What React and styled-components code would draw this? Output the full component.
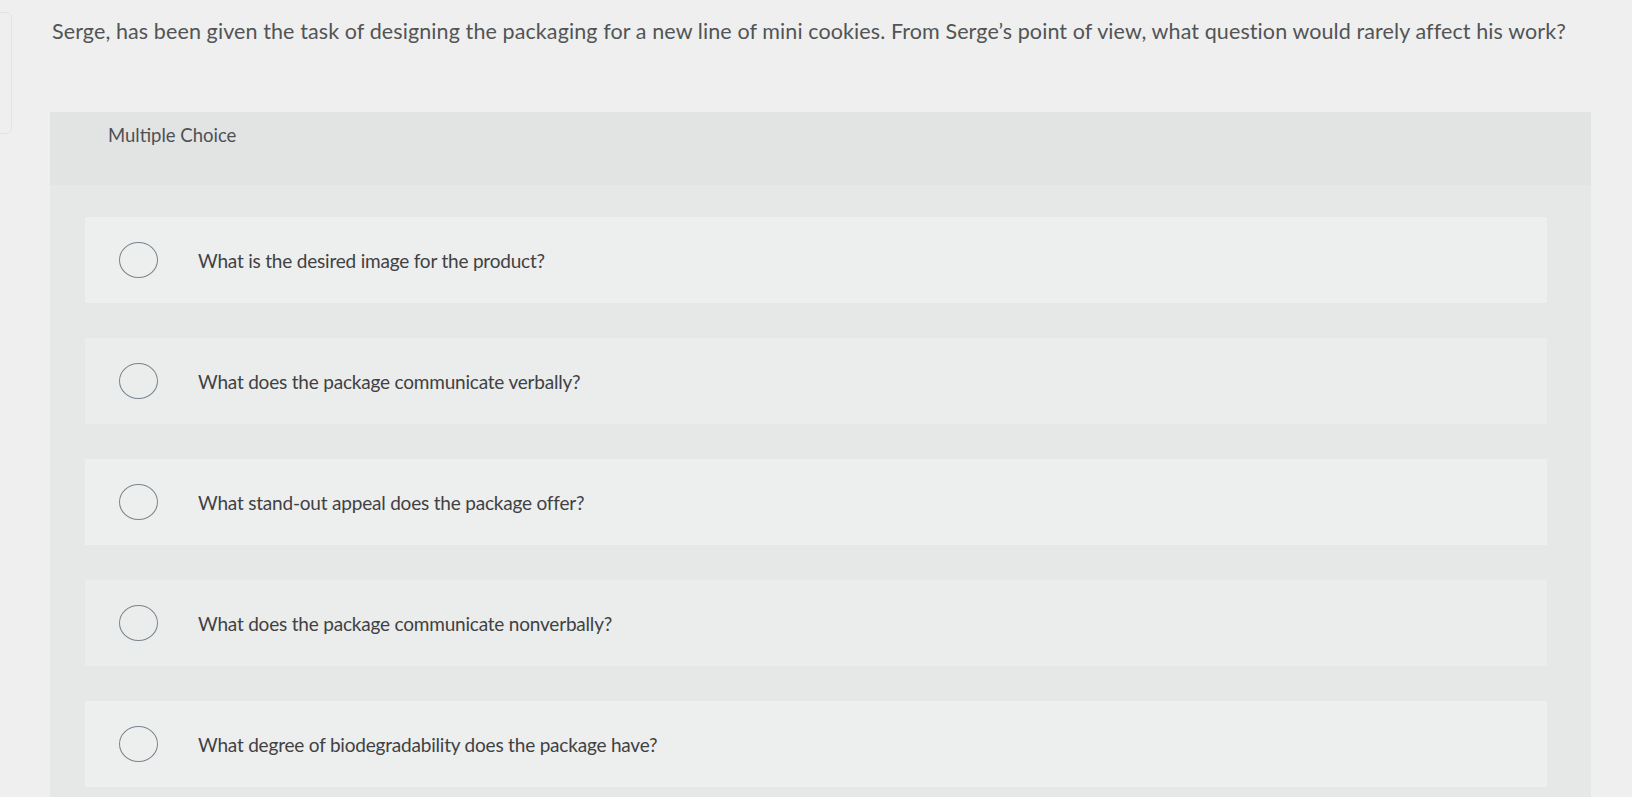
import React from "react";
import styled, { createGlobalStyle } from "styled-components";

const Global = createGlobalStyle`
  html, body { margin: 0; padding: 0; }
  body {
    background: #eeefee;
    font-family: Lato, "Open Sans", "Liberation Sans", sans-serif;
    overflow: hidden;
    height: 797px;
  }
`;

const Page = styled.div`
  position: relative;
  width: 1632px;
  height: 797px;
  overflow: hidden;
  background: #eeefee;
`;

const SideTab = styled.div`
  position: absolute;
  left: -20px;
  top: 12px;
  width: 30px;
  height: 120px;
  border: 1px solid #e2e3e3;
  border-radius: 6px;
`;

const Question = styled.h1`
  margin: 0;
  padding: 17px 0 0 52px;
  font-size: 21.5px;
  font-weight: 400;
  color: #525456;
  line-height: 28px;
  white-space: nowrap;
  letter-spacing: 0.1px;
`;

const Panel = styled.section`
  margin: 67px 0 0 50px;
  width: 1541px;
  background: #e6e7e7;
`;

const PanelHeader = styled.div`
  height: 73px;
  box-sizing: border-box;
  background: #e2e3e3;
  padding: 11px 0 0 58px;
  font-size: 18.5px;
  line-height: 24px;
  color: #4e5052;
`;

const Options = styled.div`
  display: flex;
  flex-direction: column;
  gap: 35px;
  padding: 32px 44px 20px 35px;
`;

const Option = styled.label`
  display: flex;
  align-items: center;
  height: 86px;
  padding-left: 34px;
  background: ${(p) => (p.$faded ? "#ebecec" : "#edeeee")};
  cursor: pointer;
`;

const Radio = styled.span`
  flex: none;
  width: 39px;
  height: 36px;
  border-radius: 50%;
  border: 1.6px solid #7a848e;
  box-sizing: border-box;
  margin-right: 40px;
`;

const OptionText = styled.span`
  font-size: 19px;
  color: #3f4143;
  letter-spacing: -0.2px;
`;

const options = [
  "What is the desired image for the product?",
  "What does the package communicate verbally?",
  "What stand-out appeal does the package offer?",
  "What does the package communicate nonverbally?",
  "What degree of biodegradability does the package have?",
];

export default function App() {
  return (
    <Page>
      <Global />
      <SideTab />
      <Question>
        Serge, has been given the task of designing the packaging for a new line of mini cookies. From Serge’s point of view, what question would rarely affect his work?
      </Question>
      <Panel>
        <PanelHeader>Multiple Choice</PanelHeader>
        <Options>
          {options.map((o, i) => (
            <Option key={i} $faded={i % 2 === 1}>
              <Radio />
              <OptionText>{o}</OptionText>
            </Option>
          ))}
        </Options>
      </Panel>
    </Page>
  );
}
